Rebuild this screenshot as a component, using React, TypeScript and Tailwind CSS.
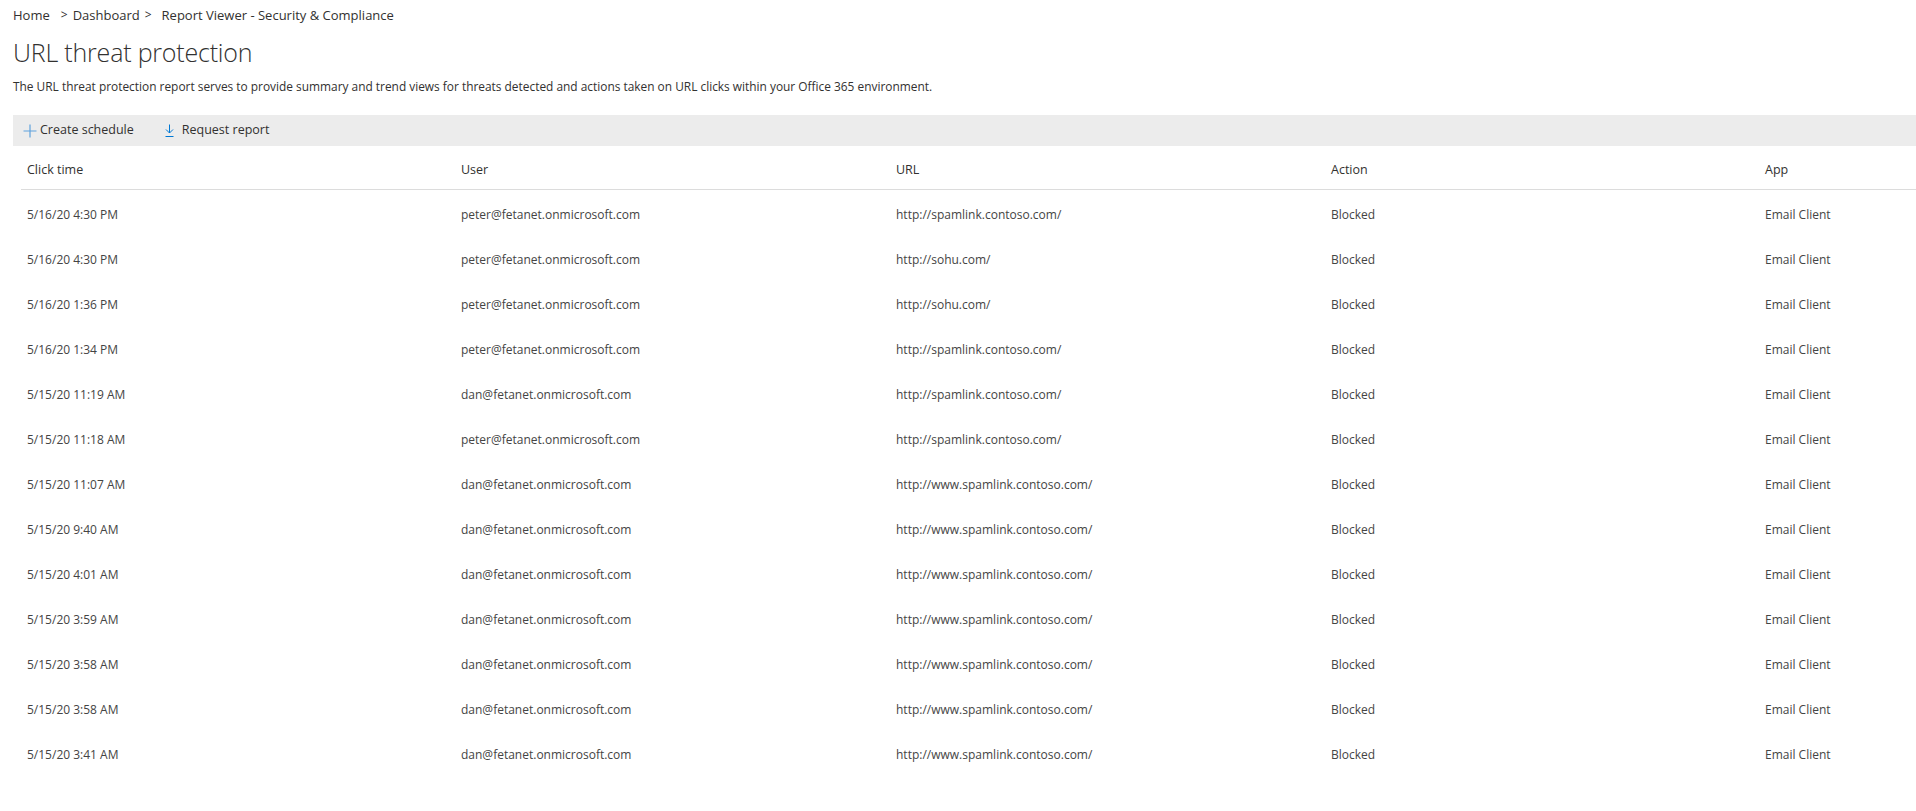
import React from "react"

interface Click {
  time: string
  user: string
  url: string
  action: string
  app: string
}

const peter = "peter@fetanet.onmicrosoft.com"
const dan = "dan@fetanet.onmicrosoft.com"
const spam = "http://spamlink.contoso.com/"
const www = "http://www.spamlink.contoso.com/"
const sohu = "http://sohu.com/"

const rows: Click[] = [
  { time: "5/16/20 4:30 PM", user: peter, url: spam, action: "Blocked", app: "Email Client" },
  { time: "5/16/20 4:30 PM", user: peter, url: sohu, action: "Blocked", app: "Email Client" },
  { time: "5/16/20 1:36 PM", user: peter, url: sohu, action: "Blocked", app: "Email Client" },
  { time: "5/16/20 1:34 PM", user: peter, url: spam, action: "Blocked", app: "Email Client" },
  { time: "5/15/20 11:19 AM", user: dan, url: spam, action: "Blocked", app: "Email Client" },
  { time: "5/15/20 11:18 AM", user: peter, url: spam, action: "Blocked", app: "Email Client" },
  { time: "5/15/20 11:07 AM", user: dan, url: www, action: "Blocked", app: "Email Client" },
  { time: "5/15/20 9:40 AM", user: dan, url: www, action: "Blocked", app: "Email Client" },
  { time: "5/15/20 4:01 AM", user: dan, url: www, action: "Blocked", app: "Email Client" },
  { time: "5/15/20 3:59 AM", user: dan, url: www, action: "Blocked", app: "Email Client" },
  { time: "5/15/20 3:58 AM", user: dan, url: www, action: "Blocked", app: "Email Client" },
  { time: "5/15/20 3:58 AM", user: dan, url: www, action: "Blocked", app: "Email Client" },
  { time: "5/15/20 3:41 AM", user: dan, url: www, action: "Blocked", app: "Email Client" },
]

const columns = ["Click time", "User", "URL", "Action", "App"]

function PlusIcon() {
  return (
    <svg width="14" height="14" viewBox="0 0 14 14" className="text-[#5fa2dd]">
      <path d="M7 0.5V13.5M0.5 7H13.5" stroke="currentColor" strokeWidth="1.2" fill="none" />
    </svg>
  )
}

function DownloadIcon() {
  return (
    <svg width="9" height="13" viewBox="0 0 9 13" className="text-[#0078d4]">
      <path d="M4.5 0.5V9M1 5.5L4.5 9L8 5.5M0.5 12.5H8.5" stroke="currentColor" strokeWidth="1" fill="none" />
    </svg>
  )
}

export default function App() {
  return (
    <div className="min-h-screen bg-white text-[#323130] font-['Open_Sans',sans-serif] overflow-hidden">
      <div className="px-[13px] pt-[5px]">
        {/* Breadcrumb */}
        <nav className="flex items-center text-[13px] leading-[20px] text-[#323130]">
          <span>Home</span>
          <span className="ml-[11px] mr-[5px] text-[12px]">&gt;</span>
          <span>Dashboard</span>
          <span className="ml-[5px] mr-[10px] text-[12px]">&gt;</span>
          <span>Report Viewer - Security &amp; Compliance</span>
        </nav>

        <h1 className="mt-[10px] text-[25px] leading-[34px] font-light tracking-[-0.2px]">URL threat protection</h1>
        <p className="mt-[9px] text-[11.9px] leading-[16px] text-[#323130]">
          The URL threat protection report serves to provide summary and trend views for threats detected and actions taken on URL clicks within your Office 365 environment.
        </p>
      </div>

      {/* Command bar */}
      <div className="ml-[13px] mt-[21px] flex h-[31px] items-center bg-[#ececec] text-[12.5px]">
        <button className="ml-[10px] flex items-center gap-[3px]">
          <PlusIcon />
          <span>Create schedule</span>
        </button>
        <button className="ml-[31px] flex items-center gap-[8px]">
          <DownloadIcon />
          <span>Request report</span>
        </button>
      </div>

      {/* Table */}
      <div className="ml-[21px] text-[12px]">
        <div className="grid h-[44px] grid-cols-[434px_435px_435px_434px_1fr] items-center border-b border-[#dcdcdc] pt-[5px]">
          {columns.map((c) => (
            <div key={c} className="pl-[6px] text-[12.5px]">
              {c}
            </div>
          ))}
        </div>
        <div className="pt-[2px]">
          {rows.map((r, i) => (
            <div key={i} className="grid h-[45px] grid-cols-[434px_435px_435px_434px_1fr] items-center text-[#444]">
              <div className="pl-[6px]">{r.time}</div>
              <div className="pl-[6px]">{r.user}</div>
              <div className="pl-[6px]">{r.url}</div>
              <div className="pl-[6px]">{r.action}</div>
              <div className="pl-[6px]">{r.app}</div>
            </div>
          ))}
        </div>
      </div>
    </div>
  )
}
